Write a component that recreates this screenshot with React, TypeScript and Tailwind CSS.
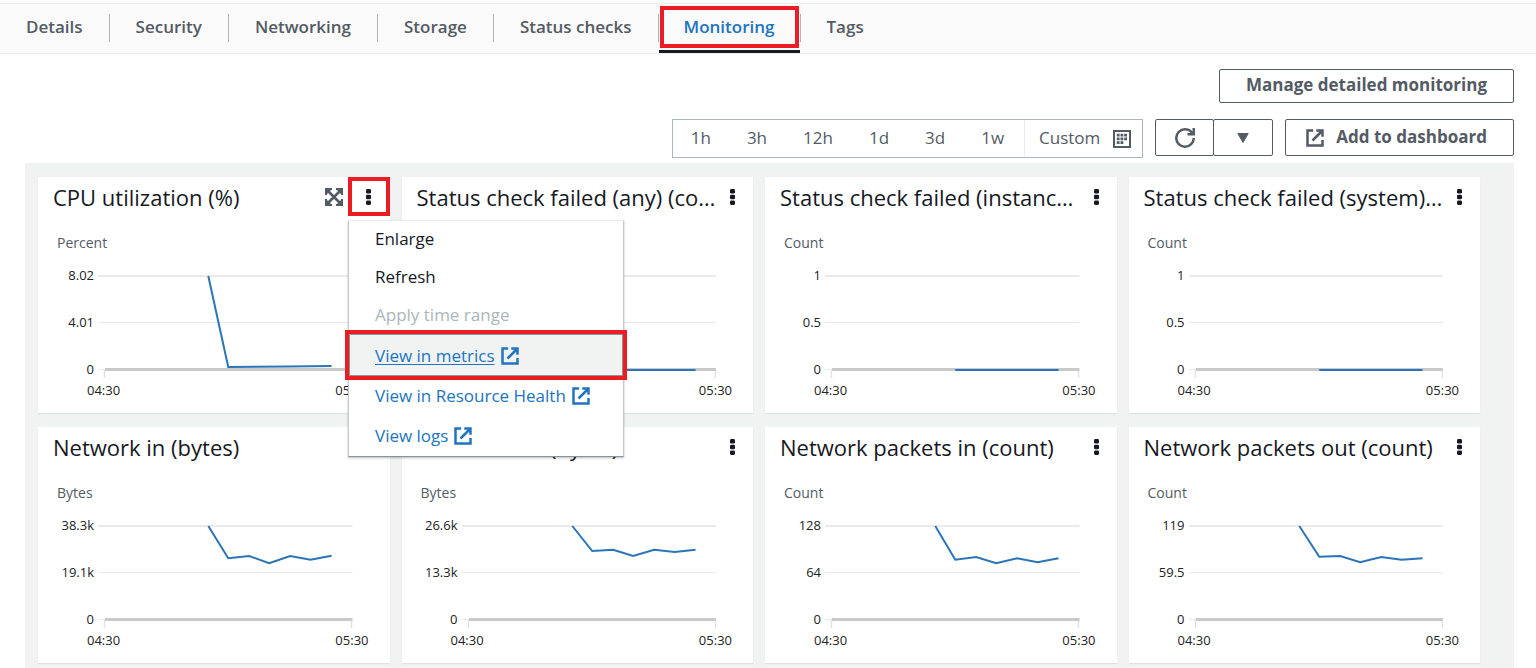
type Chart = {
  title: string
  unit: string
  ticks: string[]
  points: string
  open?: boolean
}

const tabs = ["Details", "Security", "Networking", "Storage", "Status checks", "Monitoring", "Tags"]

const ranges = ["1h", "3h", "12h", "1d", "3d", "1w"]

const flat = "130.5,96 234,96"

const charts: Chart[] = [
  { title: "CPU utilization (%)", unit: "Percent", ticks: ["8.02", "4.01", "0"], points: "110.5,2 130.5,93 192,92.5 234,92", open: true },
  { title: "Status check failed (any) (count)", unit: "Count", ticks: ["1", "0.5", "0"], points: flat },
  { title: "Status check failed (instance) (count)", unit: "Count", ticks: ["1", "0.5", "0"], points: flat },
  { title: "Status check failed (system) (count)", unit: "Count", ticks: ["1", "0.5", "0"], points: flat },
  { title: "Network in (bytes)", unit: "Bytes", ticks: ["38.3k", "19.1k", "0"], points: "110.5,2 130.5,34.3 151.5,32 171.5,39.3 192.5,32 213,35.7 234,31.7" },
  { title: "Network out (bytes)", unit: "Bytes", ticks: ["26.6k", "13.3k", "0"], points: "110.5,2 130.5,27 151.5,25.7 171.5,32 192.5,25.7 213,28 234,25.7" },
  { title: "Network packets in (count)", unit: "Count", ticks: ["128", "64", "0"], points: "110.5,2 130.5,35.7 151.5,33 171.5,39.3 192.5,34.3 213,38.3 234,34.3" },
  { title: "Network packets out (count)", unit: "Count", ticks: ["119", "59.5", "0"], points: "110.5,2 130.5,32.7 151.5,32 171.5,38.3 192.5,33 213,35.7 234,34.3" },
]

function ExternalIcon() {
  return (
    <svg className="h-5 w-5 shrink-0" viewBox="0 0 16 16" fill="none" stroke="currentColor" strokeWidth="2" aria-hidden="true">
      <path d="M9 2h5v5M6 10l8-8M14 9.5V14H2V2h4.5" />
    </svg>
  )
}

function RefreshIcon() {
  return (
    <svg className="h-5 w-5" viewBox="0 0 16 16" fill="none" stroke="currentColor" strokeWidth="2" aria-hidden="true">
      <path d="M10 5h5V0" />
      <path d="M15 8a6.957 6.957 0 0 1-7 7 6.957 6.957 0 0 1-7-7 6.957 6.957 0 0 1 7-7 6.87 6.87 0 0 1 6.3 4" />
    </svg>
  )
}

function CalendarIcon() {
  return (
    <svg className="h-[18px] w-[18px]" viewBox="0 0 18 18" aria-hidden="true">
      <rect x="1" y="1" width="16" height="16" fill="none" stroke="currentColor" strokeWidth="2" />
      <path
        fill="currentColor"
        d="M3.8 3.8h2.8v2.8H3.8zM7.5 3.8h2.8v2.8H7.5zM11.2 3.8H14v2.8h-2.8zM3.8 7.5h2.8v2.8H3.8zM7.5 7.5h2.8v2.8H7.5zM11.2 7.5H14v2.8h-2.8zM3.8 11.2h2.8V14H3.8zM7.5 11.2h2.8V14H7.5z"
      />
    </svg>
  )
}

function ExpandIcon() {
  return (
    <svg className="h-[18px] w-[18px]" viewBox="0 0 18 18" fill="none" stroke="currentColor" strokeWidth="2" aria-hidden="true">
      <path d="M2 2l14 14M16 2L2 16" strokeWidth="2.6" />
      <path d="M1 7V1h6M11 1h6v6M17 11v6h-6M7 17H1v-6" />
      <path d="M1 1h6L1 7zM17 1v6l-6-6zM17 17h-6l6-6zM1 17v-6l6 6z" fill="currentColor" stroke="none" />
    </svg>
  )
}

function KebabIcon() {
  return (
    <svg className="h-4 w-[5px]" viewBox="0 0 5 16" fill="currentColor" aria-hidden="true">
      <rect width="5" height="4.6" rx="1.4" />
      <rect y="5.7" width="5" height="4.6" rx="1.4" />
      <rect y="11.4" width="5" height="4.6" rx="1.4" />
    </svg>
  )
}

function Menu() {
  return (
    <div className="absolute top-[43px] left-[310px] z-20 flex w-[276px] flex-col border border-t-[#eaeded] border-x-[#c4cbcb] border-b-[#879596] bg-white text-[17px] text-[#16191f] shadow-[0_1px_2px_rgba(0,28,36,0.3)]">
      <button className="h-[38px] px-[26px] pb-0.5 text-left">Enlarge</button>
      <button className="h-[38px] px-[26px] pb-0.5 text-left">Refresh</button>
      <button className="h-[37px] px-[26px] pb-0.5 text-left font-medium text-[#aab7b8]" disabled>Apply time range</button>
      <a href="#" className="relative flex h-[42px] items-center gap-[5px] border border-[#879596] bg-[#f1f3f3] px-[25px] pt-0.5 text-[#2074c0] outline-4 outline-[#ec1c24]">
        <span className="underline underline-offset-2">View in metrics</span>
        <ExternalIcon />
      </a>
      <a href="#" className="flex h-10 items-center gap-[5px] px-[26px] text-[#2074c0]">
        View in Resource Health
        <ExternalIcon />
      </a>
      <a href="#" className="flex h-10 items-center gap-[5px] px-[26px] text-[#2074c0]">
        View logs
        <ExternalIcon />
      </a>
    </div>
  )
}

function Card({ chart }: { chart: Chart }) {
  return (
    <section className="relative h-[236px] min-w-0 bg-white shadow-[0_1px_1px_rgba(0,28,36,0.08)]">
      <div className="flex h-[39px] items-center pl-[15px]">
        <h2 className="mr-[3px] min-w-0 flex-1 truncate text-[22px] leading-8 text-[#16191f]">{chart.title}</h2>
        {chart.open && (
          <button aria-label="Enlarge" className="mr-[5px] text-[#545b64]">
            <ExpandIcon />
          </button>
        )}
        {chart.open ? (
          <button aria-label="Actions" className="flex h-[39px] w-[42px] items-center justify-center border-4 border-[#ec1c24] text-[#16191f]">
            <KebabIcon />
          </button>
        ) : (
          <button aria-label="Actions" className="flex h-[39px] w-[31px] items-center justify-center pr-2.5 text-[#16191f]">
            <KebabIcon />
          </button>
        )}
      </div>
      <p className="mt-4 pl-[19px] text-[14px] leading-[22px] text-[#545b64]">{chart.unit}</p>
      <div className="mt-5 flex gap-1 pr-[37px] text-[13px] text-[#222]">
        <div className="-mt-2 flex h-[112px] w-14 flex-col justify-between text-right leading-[18px]">
          {chart.ticks.map((t) => (
            <span key={t}>{t}</span>
          ))}
        </div>
        <svg className="h-[104px] min-w-0 flex-1" viewBox="0 0 255 104" preserveAspectRatio="none" fill="none" aria-hidden="true">
          <path d="M0 2h255" stroke="#eaeaea" strokeWidth="2" />
          <path d="M0 48.5h255M0 95.5h7" stroke="#eaeaea" />
          <path d="M6.5 96v8M254 96v8" stroke="#e3e3e3" strokeWidth="1.5" />
          <path d="M7 95.5h248" stroke="#c9c9c9" strokeWidth="3" />
          <polyline points={chart.points} stroke="#2a74b8" strokeWidth="2" />
        </svg>
      </div>
      <div className="mt-[3px] flex justify-between pr-[21px] pl-[49px] text-[13px] leading-[18px] text-[#222]">
        <span>04:30</span>
        <span>05:30</span>
      </div>
      {chart.open && <Menu />}
    </section>
  )
}

export default function App() {
  return (
    <div className="flex min-h-screen flex-col bg-white pt-[3px] font-['Open_Sans','Noto_Sans',sans-serif] text-[#545b64]">
      <nav className="flex h-[51px] border-y border-[#eaeded] bg-[#fafafa] text-[17px] font-semibold">
        {tabs.map((tab) =>
          tab === "Monitoring" ? (
            <div key={tab} className="flex">
              <a href="#" className="flex h-[49px] flex-col border-b-3 border-[#16191f] pt-0.5 text-[#2074c0]">
                <span className="mx-px flex h-[42px] items-center border-4 border-[#ec1c24] px-5">{tab}</span>
              </a>
              <span className="mt-2.5 h-7 w-px bg-[#aab7b8]" />
            </div>
          ) : (
            <div key={tab} className="flex">
              <a href="#" className="flex h-[46px] items-center px-[26px]">{tab}</a>
              {tab !== "Tags" && <span className="mt-2.5 h-7 w-px bg-[#aab7b8]" />}
            </div>
          )
        )}
      </nav>

      <div className="flex flex-col items-end gap-4 px-[22px] pt-[15px]">
        <button className="h-[34px] rounded-xs border border-[#545b64] px-[26px] pb-0.5 text-[17px] leading-6 font-bold">
          Manage detailed monitoring
        </button>
        <div className="flex items-start gap-3 text-[17px]">
          <div className="flex h-[39px] border border-[#aab7b8]">
            <div className="flex border-r border-[#eaeded] pr-0.5">
              {ranges.map((r) => (
                <button key={r} className="px-[18px] pb-0.5">{r}</button>
              ))}
            </div>
            <button className="flex items-center gap-[13px] pr-[11px] pl-3.5">
              <span className="pb-0.5">Custom</span>
              <CalendarIcon />
            </button>
          </div>
          <div className="flex h-[37px]">
            <button aria-label="Refresh" className="flex w-[59px] items-center justify-center rounded-xs border border-[#545b64]">
              <RefreshIcon />
            </button>
            <button aria-label="Refresh options" className="-ml-px flex w-[60px] items-center justify-center rounded-xs border border-[#545b64]">
              <svg className="h-3 w-3" viewBox="0 0 12 12" fill="currentColor" stroke="currentColor" strokeLinejoin="round" aria-hidden="true">
                <path d="M.8 1.5h10.4L6 10.5z" />
              </svg>
            </button>
          </div>
          <button className="flex h-[37px] items-center gap-[11px] rounded-xs border border-[#545b64] pr-[26px] pl-[19px] font-bold">
            <ExternalIcon />
            <span className="pb-0.5">Add to dashboard</span>
          </button>
        </div>
      </div>

      <main className="mt-[5px] mr-[22px] ml-[25px] flex-1 bg-[#f1f3f3] pt-3.5 pr-[34px] pb-1 pl-[13px]">
        <div className="grid grid-cols-4 gap-x-3 gap-y-3.5">
          {charts.map((chart) => (
            <Card key={chart.title} chart={chart} />
          ))}
        </div>
      </main>
    </div>
  )
}
